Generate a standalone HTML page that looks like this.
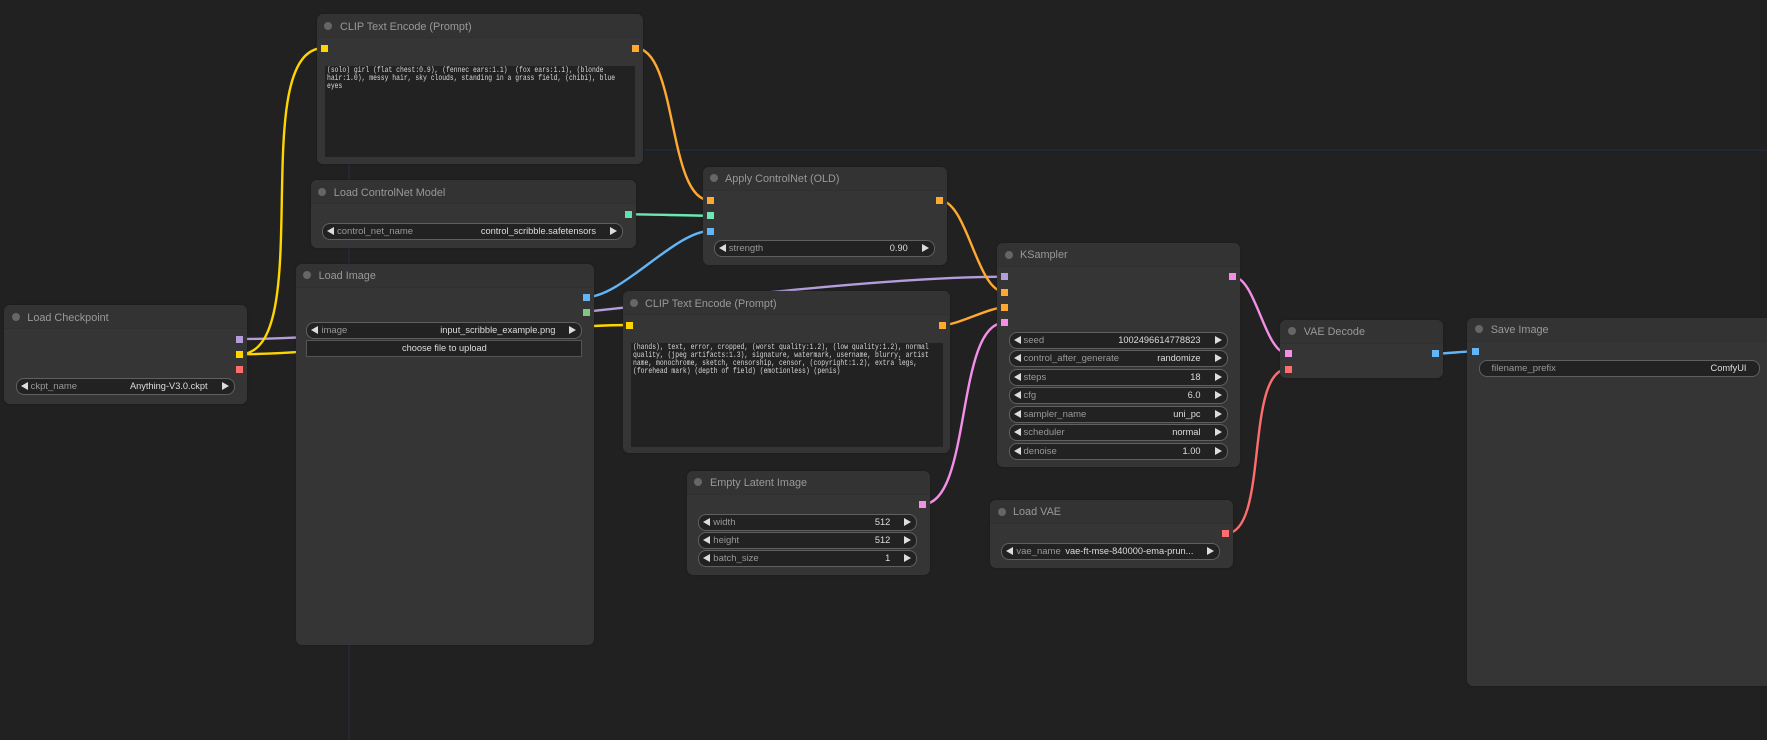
<!DOCTYPE html>
<html><head><meta charset="utf-8"><title>ComfyUI</title>
<style>
html,body{margin:0;padding:0;background:#212121;}
#c{position:relative;width:1767px;height:740px;overflow:hidden;background:#212121;font-family:"Liberation Sans",sans-serif;filter:blur(.3px);}
svg{position:absolute;left:0;top:0;}
.n{position:absolute;background:#353535;border-radius:6px;box-shadow:0 0 2px rgba(0,0,0,.3);}
.h{position:absolute;left:0;right:0;top:0;height:23px;background:#333;border-radius:6px 6px 0 0;border-bottom:1px solid #303030;}
.d{position:absolute;width:8px;height:8px;margin:-.5px 0 0 -.5px;border-radius:50%;background:#666;}
.t{position:absolute;font-size:10.85px;line-height:14px;margin-top:.7px;color:#999;white-space:nowrap;}
.s{position:absolute;width:7px;height:7px;}
.w{position:absolute;height:15px;background:#222;border:1px solid #606060;border-radius:8px;font-size:9.5px;line-height:15px;white-space:nowrap;}
.w .k{position:absolute;left:14px;color:#999;}
.w .v{position:absolute;right:26px;color:#ddd;font-size:9.25px;}
.w i{position:absolute;top:3px;width:0;height:0;border-top:4.5px solid transparent;border-bottom:4.5px solid transparent;}
.w .a{left:4px;border-right:7px solid #ddd;}
.w .b{right:5px;border-left:7px solid #ddd;}
.b2{position:absolute;height:15px;background:#222;border:1px solid #555;font-size:9.25px;line-height:15px;color:#ddd;text-align:center;}
.ta{position:absolute;background:#222;overflow:hidden;}
.ta div{position:absolute;left:1.5px;top:1px;width:125%;transform:scaleX(.8);transform-origin:0 0;color:#d8d8d8;font-family:"Liberation Mono",monospace;font-size:8px;line-height:8.2px;white-space:pre;}
</style></head><body>
<div id="c">
<svg width="1767" height="740" fill="none" stroke-width="2.4" stroke-linecap="round">
<path d="M349 163V740" stroke="#262a3c" stroke-width="1.5"/>
<path d="M643 150H1767" stroke="#1e2a3e" stroke-width="1.5"/>
<path d="M239.5 339C430 339 813 276.7 1004.7 276.7" stroke="#b39ddb"/>
<path d="M239.5 354.3C318.8 354.3 244.8 48 324 48" stroke="#ffd500"/>
<path d="M239.5 354.3C339 354.3 530 325 629.7 325" stroke="#ffd500"/>
<path d="M635 48C678 48 667 200.3 710 200.3" stroke="#ffa931"/>
<path d="M628.4 214.3C649 214.3 689.6 215.7 710 215.7" stroke="#6ee7b7"/>
<path d="M586.7 297C621.4 297 675.3 231 710 231" stroke="#64b5f6"/>
<path d="M939.4 200.3C967.4 200.3 976.7 292 1004.7 292" stroke="#ffa931"/>
<path d="M942.8 325C958.2 325 989.3 307.3 1004.7 307.3" stroke="#ffa931"/>
<path d="M922.5 504.3C972.3 504.3 954.9 322.7 1004.7 322.7" stroke="#f48fe8"/>
<path d="M1232.6 276.7C1256.3 276.7 1264.3 353.7 1288 353.7" stroke="#f48fe8"/>
<path d="M1225.6 533.7C1269.7 533.7 1243.9 369 1288 369" stroke="#ff6e6e"/>
<path d="M1435.2 353.7C1445.2 353.7 1465 351.3 1475 351.3" stroke="#64b5f6"/>
</svg>

<!-- Load Checkpoint -->
<div class="n" style="left:4px;top:305px;width:243px;height:99px"><div class="h"></div></div>
<div class="d" style="left:12.5px;top:313.5px"></div>
<div class="t" style="left:27.3px;top:310px">Load Checkpoint</div>
<div class="s" style="left:236px;top:335.5px;background:#b39ddb"></div>
<div class="s" style="left:236px;top:350.8px;background:#ffd500"></div>
<div class="s" style="left:236px;top:366.2px;background:#ff6e6e"></div>
<div class="w" style="left:15.6px;top:378.3px;width:217px"><i class="a"></i><span class="k">ckpt_name</span><span class="v">Anything-V3.0.ckpt</span><i class="b"></i></div>

<!-- CLIP 1 -->
<div class="n" style="left:316.7px;top:14px;width:326px;height:149.5px"><div class="h"></div></div>
<div class="d" style="left:324.5px;top:22.5px"></div>
<div class="t" style="left:340px;top:19px">CLIP Text Encode (Prompt)</div>
<div class="s" style="left:320.5px;top:44.5px;background:#ffd500"></div>
<div class="s" style="left:631.5px;top:44.5px;background:#ffa931"></div>
<div class="ta" style="left:325px;top:66px;width:310px;height:91px"><div>(solo) girl (flat chest:0.9), (fennec ears:1.1)  (fox ears:1.1), (blonde
hair:1.0), messy hair, sky clouds, standing in a grass field, (chibi), blue
eyes</div></div>

<!-- Load ControlNet -->
<div class="n" style="left:311px;top:180.3px;width:324.5px;height:67.4px"><div class="h"></div></div>
<div class="d" style="left:318.5px;top:188.5px"></div>
<div class="t" style="left:333.8px;top:185px">Load ControlNet Model</div>
<div class="s" style="left:625px;top:210.8px;background:#64e0b0"></div>
<div class="w" style="left:322px;top:223px;width:299px"><i class="a"></i><span class="k">control_net_name</span><span class="v">control_scribble.safetensors</span><i class="b"></i></div>

<!-- Load Image -->
<div class="n" style="left:295.5px;top:264px;width:298.8px;height:381px"><div class="h"></div></div>
<div class="d" style="left:303px;top:271.5px"></div>
<div class="t" style="left:318.6px;top:268px">Load Image</div>
<div class="s" style="left:583.2px;top:293.5px;background:#64b5f6"></div>
<div class="s" style="left:583.2px;top:309.2px;background:#81c784"></div>
<div class="w" style="left:306.4px;top:321.7px;width:274px"><i class="a"></i><span class="k">image</span><span class="v">input_scribble_example.png</span><i class="b"></i></div>
<div class="b2" style="left:306.4px;top:340.3px;width:274px">choose file to upload</div>

<!-- Apply ControlNet -->
<div class="n" style="left:702.5px;top:166.7px;width:244.5px;height:98.3px"><div class="h"></div></div>
<div class="d" style="left:710.3px;top:174.8px"></div>
<div class="t" style="left:725px;top:171.3px">Apply ControlNet (OLD)</div>
<div class="s" style="left:706.5px;top:196.8px;background:#ffa931"></div>
<div class="s" style="left:706.5px;top:212.2px;background:#6ee7b7"></div>
<div class="s" style="left:706.5px;top:227.5px;background:#64b5f6"></div>
<div class="s" style="left:935.9px;top:196.8px;background:#ffa931"></div>
<div class="w" style="left:713.8px;top:240px;width:219px"><i class="a"></i><span class="k">strength</span><span class="v">0.90</span><i class="b"></i></div>

<!-- CLIP 2 -->
<div class="n" style="left:623px;top:291px;width:327px;height:161.7px"><div class="h"></div></div>
<div class="d" style="left:630px;top:299.5px"></div>
<div class="t" style="left:645px;top:296px">CLIP Text Encode (Prompt)</div>
<div class="s" style="left:626.2px;top:321.5px;background:#ffd500"></div>
<div class="s" style="left:939.3px;top:321.5px;background:#ffa931"></div>
<div class="ta" style="left:631px;top:343px;width:312px;height:103.7px"><div style="line-height:7.9px">(hands), text, error, cropped, (worst quality:1.2), (low quality:1.2), normal
quality, (jpeg artifacts:1.3), signature, watermark, username, blurry, artist
name, monochrome, sketch, censorship, censor, (copyright:1.2), extra legs,
(forehead mark) (depth of field) (emotionless) (penis)</div></div>

<!-- KSampler -->
<div class="n" style="left:997px;top:243px;width:243px;height:224.3px"><div class="h"></div></div>
<div class="d" style="left:1005px;top:251px"></div>
<div class="t" style="left:1020px;top:247.5px">KSampler</div>
<div class="s" style="left:1001.2px;top:273.2px;background:#b39ddb"></div>
<div class="s" style="left:1001.2px;top:288.5px;background:#ffa931"></div>
<div class="s" style="left:1001.2px;top:303.8px;background:#ffa931"></div>
<div class="s" style="left:1001.2px;top:319.2px;background:#f48fe8"></div>
<div class="s" style="left:1229.1px;top:273.2px;background:#f48fe8"></div>
<div class="w" style="left:1008.5px;top:331.7px;width:217px"><i class="a"></i><span class="k">seed</span><span class="v">1002496614778823</span><i class="b"></i></div>
<div class="w" style="left:1008.5px;top:350px;width:217px"><i class="a"></i><span class="k">control_after_generate</span><span class="v">randomize</span><i class="b"></i></div>
<div class="w" style="left:1008.5px;top:368.7px;width:217px"><i class="a"></i><span class="k">steps</span><span class="v">18</span><i class="b"></i></div>
<div class="w" style="left:1008.5px;top:387px;width:217px"><i class="a"></i><span class="k">cfg</span><span class="v">6.0</span><i class="b"></i></div>
<div class="w" style="left:1008.5px;top:405.7px;width:217px"><i class="a"></i><span class="k">sampler_name</span><span class="v">uni_pc</span><i class="b"></i></div>
<div class="w" style="left:1008.5px;top:424px;width:217px"><i class="a"></i><span class="k">scheduler</span><span class="v">normal</span><i class="b"></i></div>
<div class="w" style="left:1008.5px;top:442.7px;width:217px"><i class="a"></i><span class="k">denoise</span><span class="v">1.00</span><i class="b"></i></div>

<!-- Empty Latent -->
<div class="n" style="left:687px;top:470.7px;width:243px;height:104.3px"><div class="h"></div></div>
<div class="d" style="left:694.8px;top:478.5px"></div>
<div class="t" style="left:710px;top:475px">Empty Latent Image</div>
<div class="s" style="left:919px;top:500.8px;background:#f48fe8"></div>
<div class="w" style="left:698.3px;top:513.7px;width:217px"><i class="a"></i><span class="k">width</span><span class="v">512</span><i class="b"></i></div>
<div class="w" style="left:698.3px;top:532px;width:217px"><i class="a"></i><span class="k">height</span><span class="v">512</span><i class="b"></i></div>
<div class="w" style="left:698.3px;top:550.3px;width:217px"><i class="a"></i><span class="k">batch_size</span><span class="v">1</span><i class="b"></i></div>

<!-- Load VAE -->
<div class="n" style="left:990.3px;top:500.3px;width:242.7px;height:67.4px"><div class="h"></div></div>
<div class="d" style="left:998.3px;top:508px"></div>
<div class="t" style="left:1013px;top:504.5px">Load VAE</div>
<div class="s" style="left:1222.1px;top:530.2px;background:#ff6e6e"></div>
<div class="w" style="left:1001.4px;top:542.7px;width:217px"><i class="a"></i><span class="k">vae_name</span><span class="v">vae-ft-mse-840000-ema-prun...</span><i class="b"></i></div>

<!-- VAE Decode -->
<div class="n" style="left:1280px;top:320px;width:162.5px;height:57.7px"><div class="h"></div></div>
<div class="d" style="left:1288.3px;top:327.5px"></div>
<div class="t" style="left:1303.7px;top:324px">VAE Decode</div>
<div class="s" style="left:1284.5px;top:350.2px;background:#f48fe8"></div>
<div class="s" style="left:1284.5px;top:365.5px;background:#ff6e6e"></div>
<div class="s" style="left:1431.7px;top:350.2px;background:#64b5f6"></div>

<!-- Save Image -->
<div class="n" style="left:1467.3px;top:317.7px;width:320px;height:368px"><div class="h"></div></div>
<div class="d" style="left:1475.3px;top:325.5px"></div>
<div class="t" style="left:1490.7px;top:322px">Save Image</div>
<div class="s" style="left:1471.5px;top:347.8px;background:#64b5f6"></div>
<div class="w" style="left:1478.5px;top:360px;width:279px"><span class="k" style="left:12px">filename_prefix</span><span class="v" style="right:12px">ComfyUI</span></div>
</div>
</body></html>
